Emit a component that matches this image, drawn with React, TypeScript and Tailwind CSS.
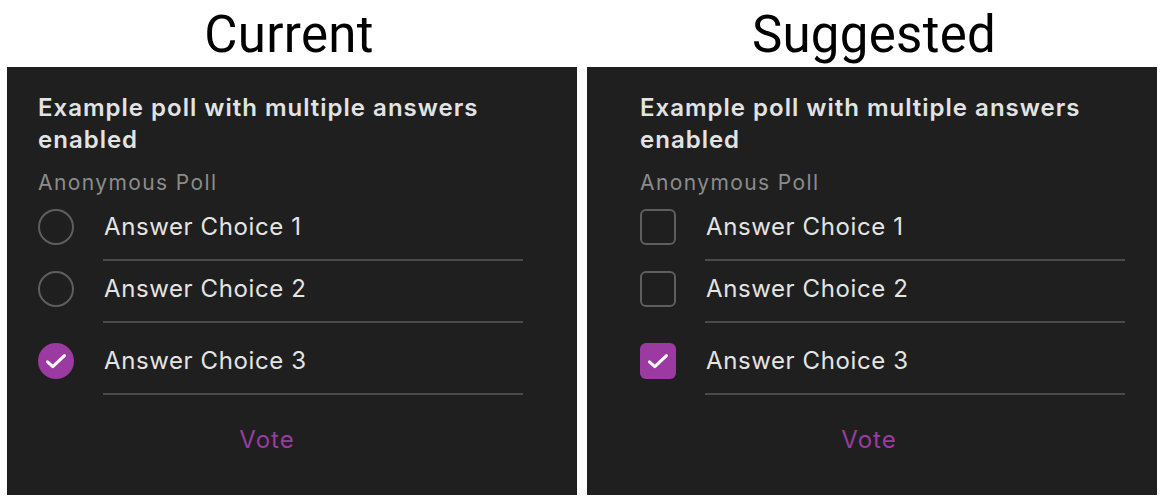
import React from "react";

const choices = ["Answer Choice 1", "Answer Choice 2", "Answer Choice 3"];

function Check() {
  return (
    <svg width="36" height="36" viewBox="0 0 36 36" fill="none">
      <path d="M9.5 18.8 L14.8 23.6 L26.5 12.6" stroke="white" strokeWidth="3" strokeLinecap="round" strokeLinejoin="round" />
    </svg>
  );
}

function Mark({ kind, checked }: { kind: "radio" | "box"; checked: boolean }) {
  const shape = kind === "radio" ? "rounded-full" : "rounded-[6px]";
  if (checked) {
    return (
      <div className={`w-[36px] h-[36px] ${shape} bg-[#9b3ba2] flex items-center justify-center shrink-0`}>
        <Check />
      </div>
    );
  }
  return <div className={`w-[36px] h-[36px] ${shape} border-2 border-[#5e5e5e] shrink-0`} />;
}

function Panel({ kind, pl }: { kind: "radio" | "box"; pl: string }) {
  return (
    <div className={`w-[570px] h-[428px] bg-[#1f1f1f] pt-[25px] ${pl}`} style={{ fontFamily: "Inter, 'Noto Sans', sans-serif" }}>
      <div className="w-[490px] text-[24px] leading-[32px] font-semibold text-[#e3e3e3] tracking-[1px]">
        Example poll with multiple answers enabled
      </div>
      <div className="mt-[13px] text-[21px] leading-[28px] text-[#8c8c8c] tracking-[1.4px]">Anonymous Poll</div>
      <div className="flex flex-col">
        {choices.map((c, i) => (
          <div key={c} className={i === 0 ? "mt-[12px]" : i === 1 ? "mt-[10px]" : "mt-[20px]"}>
            <div className="flex items-center h-[36px]">
              <Mark kind={kind} checked={i === 2} />
              <span className="ml-[30px] text-[24px] leading-[32px] text-[#e4e4e4] tracking-[0.6px]">{c}</span>
            </div>
            <div className="mt-[14px] ml-[65px] w-[420px] h-[2px] bg-[#4a4a4a]" />
          </div>
        ))}
      </div>
      <div className="w-[458px] mt-[29px] text-center text-[24px] leading-[32px] text-[#983d9f] tracking-[1px]">Vote</div>
    </div>
  );
}

export default function App() {
  return (
    <div className="w-[1161px] h-[501px] bg-white relative overflow-hidden">
      <div className="flex pl-[7px] gap-[10px] h-[67px] pt-[11px]">
        <div className="w-[570px] pr-[6px] text-center text-[51px] leading-[48px] text-black tracking-[0.3px]" style={{ fontFamily: "Roboto, sans-serif" }}>
          Current
        </div>
        <div className="w-[570px] pl-[4px] text-center text-[51px] leading-[48px] text-black tracking-[0.3px]" style={{ fontFamily: "Roboto, sans-serif" }}>
          Suggested
        </div>
      </div>
      <div className="flex pl-[7px] gap-[10px]">
        <Panel kind="radio" pl="pl-[31px]" />
        <Panel kind="box" pl="pl-[53px]" />
      </div>
    </div>
  );
}
